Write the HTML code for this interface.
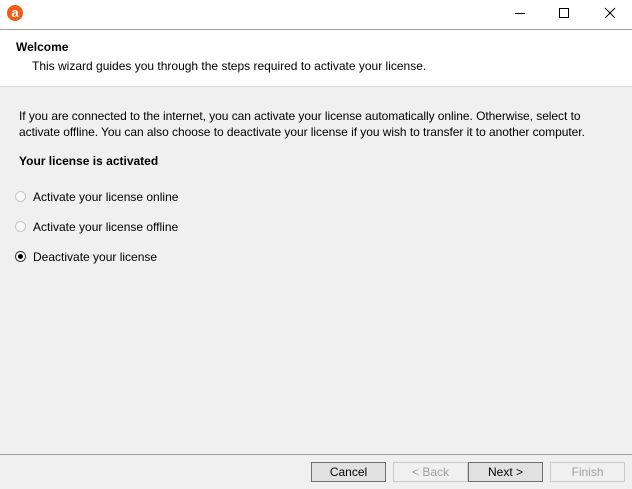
<!DOCTYPE html>
<html><head><style>
body{margin:0;width:632px;height:489px;background:#f0f0f0;font-family:"Liberation Sans",sans-serif;font-size:12px;color:#000;position:relative;overflow:hidden}
.a{position:absolute;white-space:nowrap}
.btn{position:absolute;top:462px;height:18px;width:73px;border:1px solid #adadad;text-align:center;line-height:18px;box-sizing:content-box}
.r{position:absolute;left:15px;width:11px;height:11px;border-radius:50%;border:1px solid #c8c8c8;background:#f8f8f8;box-sizing:border-box}
</style></head><body>
<div class="a" style="left:0;top:0;width:632px;height:29px;background:#fff;border-bottom:1px solid #a0a0a0"></div>
<div class="a" style="left:7px;top:5px;width:16px;height:16px;border-radius:50%;background:#f25a17;color:#fff;font-weight:bold;font-size:13px;line-height:16px;text-align:center">a</div>
<svg class="a" style="left:0;top:0" width="632" height="29"><g stroke="#000" stroke-width="1" fill="none">
<line x1="515" y1="13.5" x2="525" y2="13.5"/><rect x="559.5" y="8.5" width="9" height="9"/>
<line x1="605" y1="8" x2="615" y2="18"/><line x1="615" y1="8" x2="605" y2="18"/></g></svg>
<div class="a" style="left:0;top:30px;width:632px;height:56px;background:#fff;border-bottom:1px solid #d8d8d8"></div>
<div class="a" style="left:16px;top:40px;font-weight:bold">Welcome</div>
<div class="a" style="left:32px;top:59px">This wizard guides you through the steps required to activate your license.</div>
<div class="a" style="left:19px;top:108px;line-height:16px;letter-spacing:-0.05px">If you are connected to the internet, you can activate your license automatically online. Otherwise, select to<br>activate offline. You can also choose to deactivate your license if you wish to transfer it to another computer.</div>
<div class="a" style="left:19px;top:154px;font-weight:bold">Your license is activated</div>
<div class="r" style="top:191px"></div><div class="a" style="left:33px;top:190px">Activate your license online</div>
<div class="r" style="top:221px"></div><div class="a" style="left:33px;top:220px">Activate your license offline</div>
<div class="r" style="top:251px;border-color:#333;background:#fff"><div style="position:absolute;left:2px;top:2px;width:5px;height:5px;border-radius:50%;background:#000"></div></div>
<div class="a" style="left:33px;top:250px">Deactivate your license</div>
<div class="a" style="left:0;top:454px;width:632px;height:1px;background:#a0a0a0"></div>
<div class="btn" style="left:311px;background:#e1e1e1;border-color:#707070">Cancel</div>
<div class="btn" style="left:393px;background:#f0f0f0;border-color:#cccccc;color:#a0a0a0">&lt; Back</div>
<div class="btn" style="left:468px;background:#e1e1e1;border-color:#707070">Next &gt;</div>
<div class="btn" style="left:550px;background:#f0f0f0;border-color:#cccccc;color:#a0a0a0">Finish</div>
</body></html>
